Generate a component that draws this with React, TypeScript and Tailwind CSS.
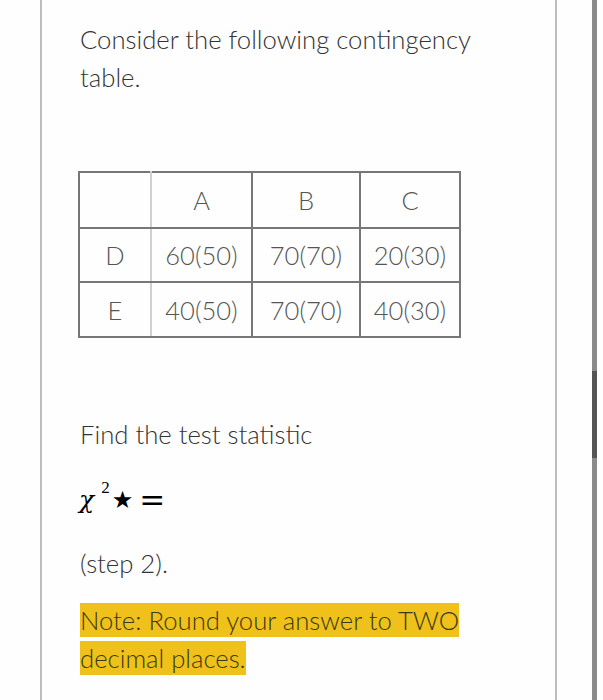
import React from "react";

export default function App() {
  const font = { fontFamily: "Lato, 'Open Sans', sans-serif" };
  return (
    <div className="w-[603px] h-[700px] bg-[#fefefe] flex overflow-hidden" style={font}>
      <div className="w-[40px] shrink-0" />
      <div className="w-[517px] shrink-0 h-full border-l-2 border-r-2 border-[#bdbdbd] pl-[38px] pr-[20px] text-[25.7px] font-light text-[#333] leading-[38px]">
        <p className="mt-[20px] w-[420px]">Consider the following contingency table.</p>
        <table className="mt-[75px] -ml-[2px] border-collapse text-[#555] text-[25.5px] font-light">
          <tbody>
            <tr className="h-[56px]">
              <td className="w-[72px] border-2 border-[#777] border-r-[#cfcfcf]"></td>
              <td className="w-[101px] border-2 border-[#777] text-center">A</td>
              <td className="w-[108px] border-2 border-[#777] text-center">B</td>
              <td className="w-[100px] border-2 border-[#777] text-center">C</td>
            </tr>
            <tr className="h-[54px]">
              <td className="border-2 border-[#777] border-r-[#cfcfcf] text-center">D</td>
              <td className="border-2 border-[#777] text-center">60(50)</td>
              <td className="border-2 border-[#777] text-center">70(70)</td>
              <td className="border-2 border-[#777] text-center">20(30)</td>
            </tr>
            <tr className="h-[55px]">
              <td className="border-2 border-[#777] border-r-[#cfcfcf] text-center">E</td>
              <td className="border-2 border-[#777] text-center">40(50)</td>
              <td className="border-2 border-[#777] text-center">70(70)</td>
              <td className="border-2 border-[#777] text-center">40(30)</td>
            </tr>
          </tbody>
        </table>
        <p className="mt-[77px]">Find the test statistic</p>
        <div className="mt-[24px] h-[38px] flex items-end text-black font-normal" style={{ fontFamily: "'DejaVu Serif', 'Liberation Serif', serif" }}>
          <span className="italic text-[25px] leading-[30px] -ml-[1px]">χ</span>
          <span className="text-[17px] leading-none relative -top-[19px] ml-[7px]" style={{ fontFamily: "'Liberation Serif', serif" }}>2</span>
          <span className="text-[24px] leading-[30px] ml-[2px]" style={{ fontFamily: "'DejaVu Sans', sans-serif" }}>★</span>
          <span className="text-[31px] leading-[30px] ml-[6px]">=</span>
        </div>
        <p className="mt-[29px]">(step 2).</p>
        <p className="mt-[19px] w-[420px] text-[#3a3a1a]">
          <span className="bg-[#efc11a] py-[2px]">Note: Round your answer to TWO decimal places.</span>
        </p>
      </div>
      <div className="w-[35px] shrink-0" />
      <div className="w-[5px] shrink-0 h-full bg-[#8a8a8a] flex flex-col">
        <div className="h-[371px]" />
        <div className="h-[87px] bg-[#555]" />
      </div>
    </div>
  );
}
